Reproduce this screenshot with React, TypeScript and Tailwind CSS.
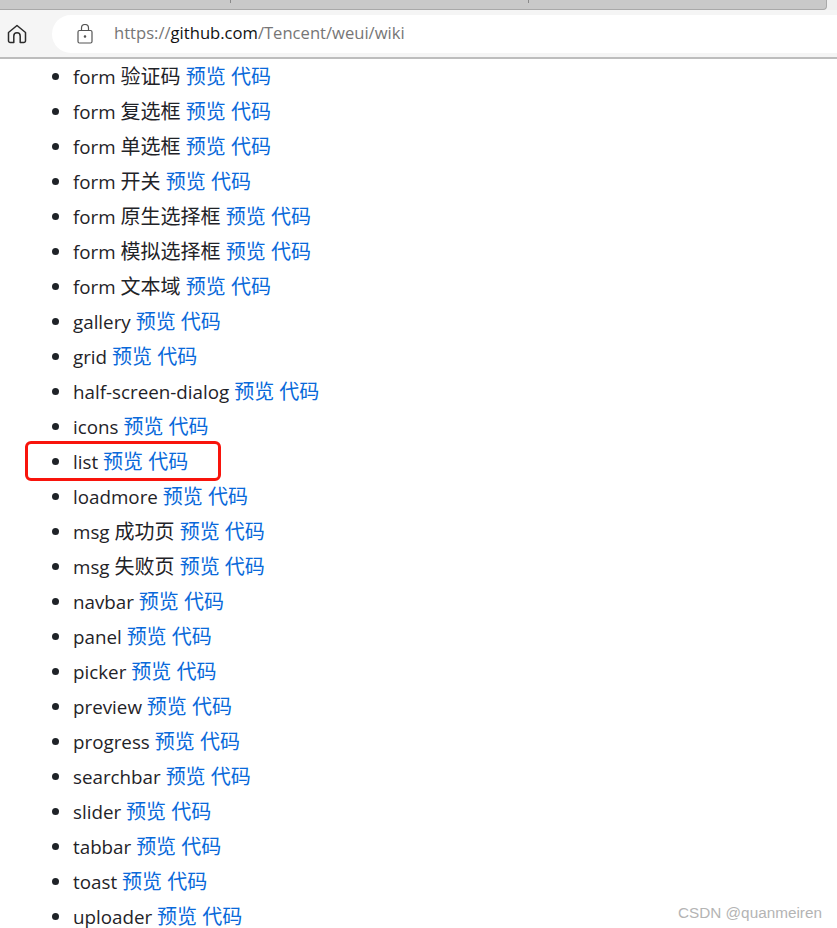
import React from "react";

const items = [
  { name: "form", label: "验证码" },
  { name: "form", label: "复选框" },
  { name: "form", label: "单选框" },
  { name: "form", label: "开关" },
  { name: "form", label: "原生选择框" },
  { name: "form", label: "模拟选择框" },
  { name: "form", label: "文本域" },
  { name: "gallery" },
  { name: "grid" },
  { name: "half-screen-dialog" },
  { name: "icons" },
  { name: "list" },
  { name: "loadmore" },
  { name: "msg", label: "成功页" },
  { name: "msg", label: "失败页" },
  { name: "navbar" },
  { name: "panel" },
  { name: "picker" },
  { name: "preview" },
  { name: "progress" },
  { name: "searchbar" },
  { name: "slider" },
  { name: "tabbar" },
  { name: "toast" },
  { name: "uploader" },
];

const App = () => {
  return (
    <div className="relative h-[928px] w-[837px] bg-white font-['Open_Sans','Noto_Sans_CJK_SC',sans-serif]">
      <div className="flex h-[59px] flex-col border-b-2 border-[#bdbdbd] bg-[#f5f5f5]">
        <div className="flex h-[10px] shrink-0 bg-[#f0f0f0] pr-[10px]">
          <div className="relative h-[10px] flex-1 rounded-br-[4px] border-r border-b border-[#a9a9a9] bg-[#c9c9c9]">
            <div className="absolute top-0 left-[230px] h-[3px] w-px bg-[#8a8a8a]" />
            <div className="absolute top-0 left-[528px] h-[3px] w-px bg-[#8a8a8a]" />
          </div>
        </div>
        <div className="flex flex-1 items-center pl-[7px]">
          <svg width="20" height="20" viewBox="0 0 20 20" fill="none" stroke="#2b2b2b" strokeWidth="1.5" strokeLinejoin="round">
            <path d="M1.5 8.5 10 1.5l8.5 7v8.2a1.8 1.8 0 0 1-1.8 1.8H13.2V12a3.2 3.2 0 0 0-6.4 0v6.5H3.3a1.8 1.8 0 0 1-1.8-1.8z" />
          </svg>
          <div className="ml-[25px] flex h-[38px] flex-1 items-center rounded-l-[19px] bg-white pl-[25px]">
            <svg width="16" height="20" viewBox="0 0 16 20" fill="none" stroke="#555555" strokeWidth="1.2">
              <rect x="1" y="6.5" width="14" height="12.5" rx="1.5" />
              <path d="M4.5 6.5V4a3.5 3.5 0 0 1 7 0v2.5" />
              <circle cx="8" cy="12.5" r="0.7" fill="#555555" />
            </svg>
            <p className="ml-[21px] text-[16.6px] text-[#767676]">
              https://<span className="text-[#111111]">github.com</span>/Tencent/weui/wiki
            </p>
          </div>
        </div>
      </div>

      <ul className="list-disc pl-[73px] text-[20px] text-[#1f2328]">
        {items.map((item, i) => (
          <li key={i} className="h-[35px] pt-[6px] leading-[23px]">
            <span className="text-[18.8px]">{item.name} </span>
            {item.label && <span>{item.label} </span>}
            <a className="text-[#0969da]">预览</a>{" "}
            <a className="text-[#0969da]">代码</a>
          </li>
        ))}
      </ul>

      {/* red annotation box */}
      <div className="absolute top-[441px] left-[25px] h-[40px] w-[196px] rounded-[6px] border-[3.5px] border-[#f8140c]" />
      <p className="absolute top-[902px] left-[678px] font-['Liberation_Sans',sans-serif] text-[15.3px] text-[#b4b4b4]">
        CSDN @quanmeiren
      </p>
    </div>
  );
};

export default App;
